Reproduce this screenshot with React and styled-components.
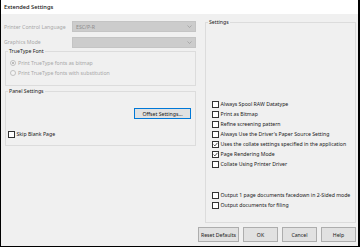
import React from 'react';
import styled, { createGlobalStyle } from 'styled-components';

const Global = createGlobalStyle`
  html, body { margin: 0; padding: 0; background: #fff; }
  body { font-family: "Noto Sans", "Open Sans", sans-serif; }
  * { box-sizing: border-box; }
`;

const Window = styled.div`
  width: 360px;
  height: 247px;
  background: #f0f0f0;
  border-left: 1px solid #000;
  border-right: 2px solid #000;
  border-bottom: 1px solid #000;
  display: flex;
  flex-direction: column;
  font-size: 5.2px;
  color: #1a1a1a;
`;

const TitleBar = styled.div`
  height: 14px;
  background: #fff;
  display: flex;
  align-items: center;
  padding-left: 3px;
  font-size: 5.7px;
  font-weight: 500;
  color: #111;
`;

const Body = styled.div`
  flex: 1;
  display: flex;
  padding: 7px 0 0 3px;
  gap: 9px;
`;

const LeftCol = styled.div`
  width: 192px;
  display: flex;
  flex-direction: column;
`;

const FieldRow = styled.div`
  display: flex;
  align-items: center;
  height: 11px;
  margin-bottom: ${p => p.$mb || 0}px;
`;

const Label = styled.div`
  width: 68px;
  color: #a8a8a8;
  white-space: nowrap;
`;

const Select = styled.div`
  flex: 1;
  height: 11px;
  background: #cccccc;
  border: 1px solid #c4c4c4;
  display: flex;
  align-items: center;
  justify-content: space-between;
  padding: 0 3px;
  color: #8c8c8c;
`;

const Chevron = () => (
  <svg width="5" height="3" viewBox="0 0 5 3">
    <path d="M0.5 0.5 L2.5 2.5 L4.5 0.5" fill="none" stroke="#9a9a9a" strokeWidth="0.7" />
  </svg>
);

const Group = styled.div`
  position: relative;
  border: 1px solid #dcdcdc;
  margin-left: 1px;
  height: ${p => p.$h}px;
  margin-top: ${p => p.$mt || 0}px;
  display: flex;
  flex-direction: column;
  padding: ${p => p.$pad || '0'};
`;

const Legend = styled.span`
  position: absolute;
  top: -4px;
  left: 2px;
  padding: 0 1px;
  background: #f0f0f0;
  line-height: 7px;
  white-space: nowrap;
`;

const RadioRow = styled.div`
  display: flex;
  align-items: center;
  height: 10.5px;
  gap: 2px;
  color: #a8a8a8;
  padding-left: 4px;
  white-space: nowrap;
`;

const RadioCircle = styled.span`
  width: 6px;
  height: 6px;
  border-radius: 50%;
  border: 0.8px solid #c0c0c0;
  background: #f4f4f4;
  display: flex;
  align-items: center;
  justify-content: center;
  &::after {
    content: '';
    display: ${p => (p.$on ? 'block' : 'none')};
    width: 2.4px;
    height: 2.4px;
    border-radius: 50%;
    background: #a8a8a8;
  }
`;

const CheckRow = styled.div`
  display: flex;
  align-items: center;
  height: 10px;
  gap: 1.5px;
  white-space: nowrap;
  margin-top: ${p => p.$mt || 0}px;
`;

const Box = styled.span`
  width: 7px;
  height: 7px;
  border: 1px solid #333;
  background: #fff;
  flex: none;
  display: flex;
  align-items: center;
  justify-content: center;
`;

const Check = ({ on, label, mt }) => (
  <CheckRow $mt={mt}>
    <Box>
      {on && (
        <svg width="5" height="5" viewBox="0 0 5 5">
          <path d="M0.6 2.6 L1.9 3.9 L4.4 0.9" fill="none" stroke="#222" strokeWidth="0.8" />
        </svg>
      )}
    </Box>
    <span>{label}</span>
  </CheckRow>
);

const Button = styled.div`
  width: ${p => p.$w}px;
  height: ${p => p.$h || 11}px;
  background: #e1e1e1;
  border: 1px solid ${p => (p.$focus ? '#0078d7' : '#adadad')};
  display: flex;
  align-items: center;
  justify-content: center;
  white-space: nowrap;
`;

const OffsetWrap = styled.div`
  display: flex;
  justify-content: flex-end;
  padding-right: 4px;
  margin-top: 16px;
`;

const SkipWrap = styled.div`
  padding-left: 2px;
  margin-top: 10px;
`;

const RightGroup = styled(Group)`
  width: 151px;
  height: 201px;
  margin-top: 1px;
  margin-left: 0;
  padding: 76px 0 0 6px;
`;

const Footer = styled.div`
  height: 19px;
  display: flex;
  justify-content: flex-end;
  align-items: flex-start;
  gap: 4px;
  padding-right: 2px;
`;

export default function App() {
  return (
    <>
      <Global />
      <Window>
        <TitleBar>Extended Settings</TitleBar>
        <Body>
          <LeftCol>
            <FieldRow $mb={4.5}>
              <Label>Printer Control Language</Label>
              <Select>
                <span>ESC/P-R</span>
                <Chevron />
              </Select>
            </FieldRow>
            <FieldRow $mb={3.5}>
              <Label>Graphics Mode</Label>
              <Select>
                <span></span>
                <Chevron />
              </Select>
            </FieldRow>
            <Group $h={35} $pad="5.5px 0 0 0">
              <Legend>TrueType Font</Legend>
              <RadioRow>
                <RadioCircle $on />
                <span>Print TrueType fonts as bitmap</span>
              </RadioRow>
              <RadioRow>
                <RadioCircle />
                <span>Print TrueType fonts with substitution</span>
              </RadioRow>
            </Group>
            <Group $h={55} $mt={5}>
              <Legend>Panel Settings</Legend>
              <OffsetWrap>
                <Button $w={57} $focus>Offset Settings...</Button>
              </OffsetWrap>
              <SkipWrap>
                <Check label="Skip Blank Page" />
              </SkipWrap>
            </Group>
          </LeftCol>
          <RightGroup>
            <Legend>Settings</Legend>
            <Check label="Always Spool RAW Datatype" />
            <Check label="Print as Bitmap" />
            <Check label="Refine screening pattern" />
            <Check label="Always Use the Driver's Paper Source Setting" />
            <Check on label="Uses the collate settings specified in the application" />
            <Check on label="Page Rendering Mode" />
            <Check label="Collate Using Printer Driver" />
            <Check mt={21} label="Output 1 page documents facedown in 2-Sided mode" />
            <Check label="Output documents for filing" />
          </RightGroup>
        </Body>
        <Footer>
          <Button $w={41} $h={15}>Reset Defaults</Button>
          <Button $w={35} $h={15}>OK</Button>
          <Button $w={35} $h={15}>Cancel</Button>
          <Button $w={35} $h={15}>Help</Button>
        </Footer>
      </Window>
    </>
  );
}
